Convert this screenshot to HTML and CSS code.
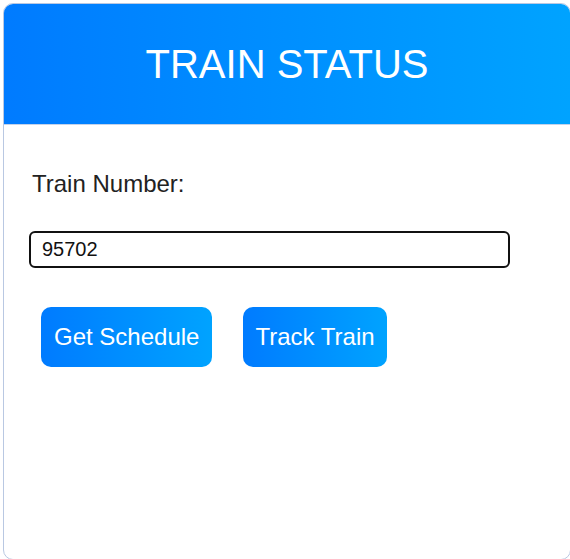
FILE: index.html
```html
<!DOCTYPE html>
<html lang="en">
  <head>
    <meta charset="UTF-8" />
    <meta name="viewport" content="width=device-width, initial-scale=1.0" />
    <title>Train Status</title>
    <link rel="stylesheet" href="styles.css">
  </head>
  <body>
    <div class="status-card">
      <div class="status-header">
        <h1>TRAIN STATUS</h1>
      </div>
      <div class="status-body">
        <label for="trainNumber">Train Number:</label>
        <input type="text" id="trainNumber" name="trainNumber" value="95702" />
        <div class="actions">
          <button type="button">Get Schedule</button>
          <button type="button" class="track-btn">Track Train</button>
        </div>
      </div>
    </div>
  </body>
</html>
```

FILE: styles.css
```css
* {
  box-sizing: border-box;
}

html,
body {
  overflow: hidden;
}

body {
  font-family: "Liberation Sans", Arial, sans-serif;
  background: #fff;
  margin: 0;
  padding: 3px 0 0 3px;
}

.status-card {
  width: 568px;
  height: 557px;
  background: #fff;
  border: 1px solid #b9c8e2;
  border-radius: 10px;
  overflow: hidden;
}

.status-header {
  background: linear-gradient(90deg, #007bff, #00a3ff);
  padding: 37px 0;
  border-bottom: 1px solid #c3d2ea;
  text-align: center;
}

.status-header h1 {
  margin: 0;
  font-size: 40px;
  font-weight: normal;
  line-height: 46px;
  color: #fff;
}

.status-body {
  padding: 45px 0 0 25px;
}

label {
  display: block;
  margin-left: 3px;
  font-size: 24px;
  line-height: 28px;
  color: #222;
}

input {
  display: block;
  width: 481px;
  margin-top: 33px;
  padding: 5px 11px;
  font-family: inherit;
  font-size: 20px;
  line-height: 23px;
  color: #111;
  border: 2px solid #111;
  border-radius: 6px;
}

.actions {
  display: flex;
  gap: 31px;
  margin-top: 39px;
  padding-left: 12px;
}

button {
  padding: 16px 13px;
  font-family: inherit;
  font-size: 24px;
  line-height: 28px;
  color: #fff;
  background: linear-gradient(90deg, #007bff, #00a3ff);
  border: none;
  border-radius: 10px;
  cursor: pointer;
}

.track-btn {
  padding: 16px 12px;
}
```
